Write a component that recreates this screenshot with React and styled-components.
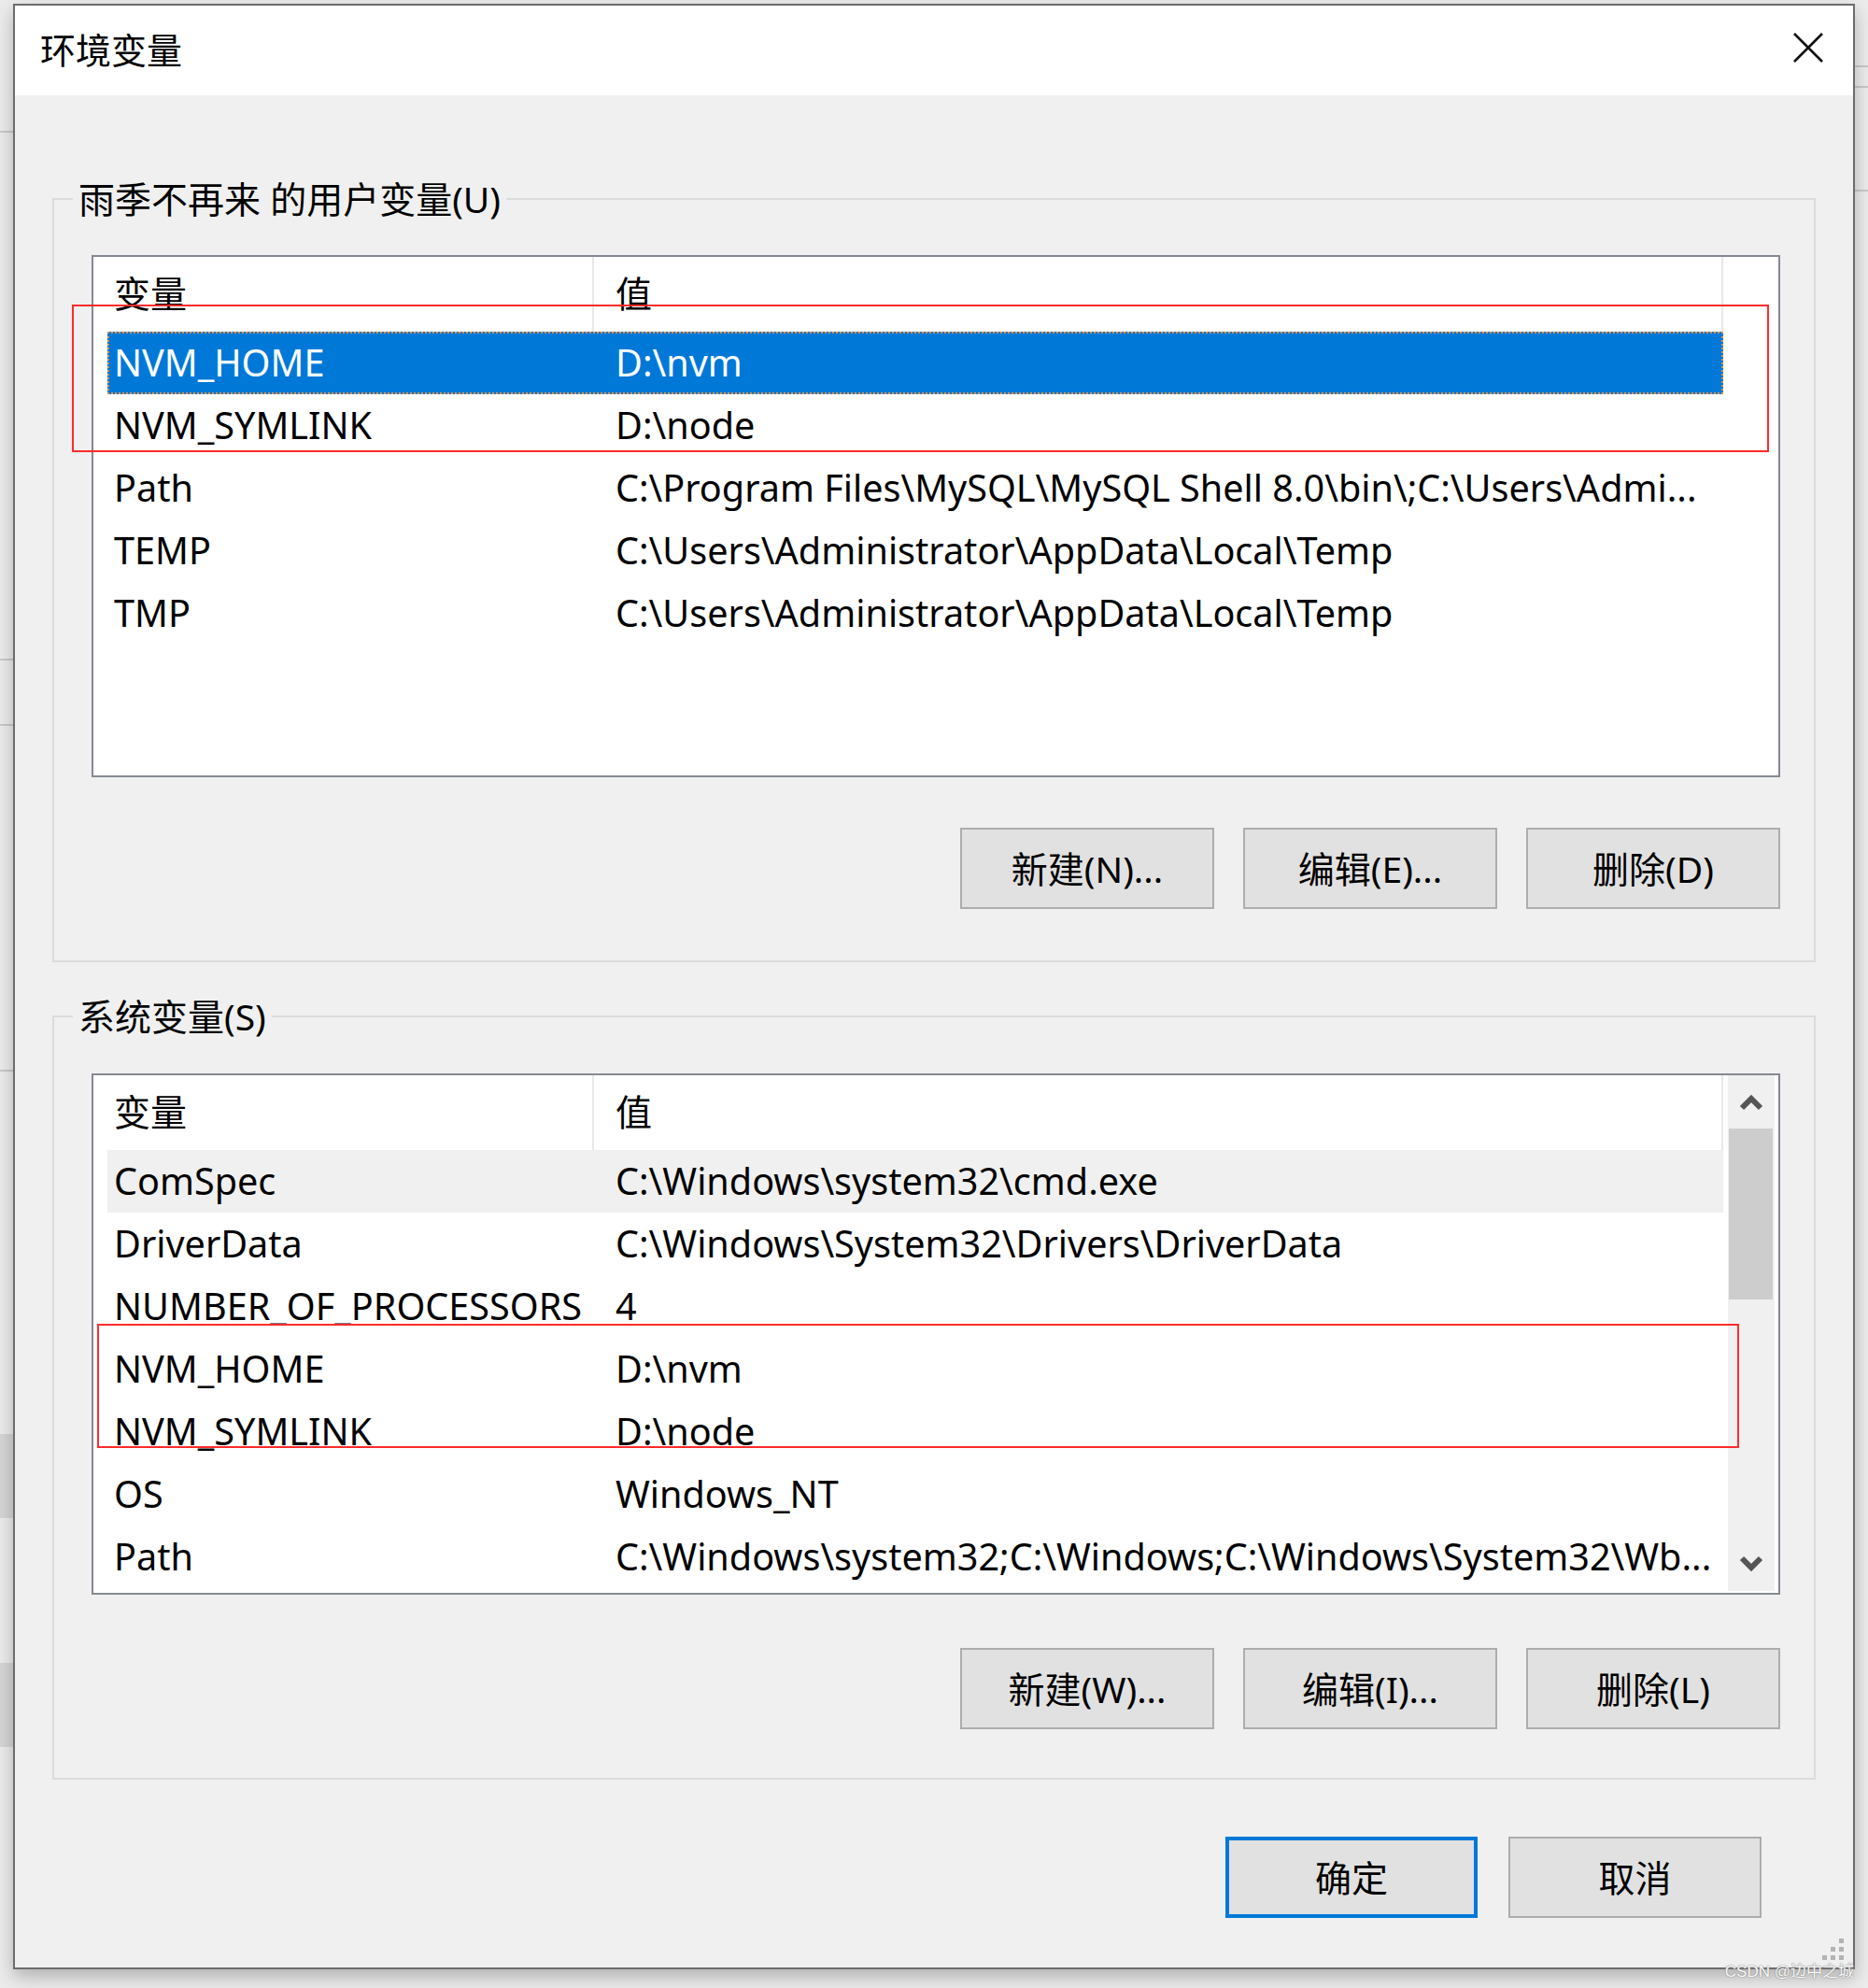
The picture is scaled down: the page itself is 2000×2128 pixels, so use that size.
import React from 'react';
import styled, { createGlobalStyle } from 'styled-components';

const GlobalStyle = createGlobalStyle`
  html, body {
    margin: 0;
    padding: 0;
  }
  body {
    width: 2000px;
    height: 2128px;
    overflow: hidden;
    background: #e3e3e3;
    font-family: "Noto Sans", "Noto Sans CJK SC", sans-serif;
    color: #000;
  }
`;

const Screen = styled.div`
  position: relative;
  width: 2000px;
  height: 2128px;
  box-sizing: border-box;
  padding: 4px 14px 0 14px;
  background:
    linear-gradient(#c9c9c9, #c9c9c9) 0 140px / 14px 2px no-repeat,
    linear-gradient(#c9c9c9, #c9c9c9) 0 705px / 14px 2px no-repeat,
    linear-gradient(#c9c9c9, #c9c9c9) 0 775px / 14px 2px no-repeat,
    linear-gradient(#c9c9c9, #c9c9c9) 0 1145px / 14px 2px no-repeat,
    linear-gradient(#d6d6d6, #d6d6d6) 0 1535px / 14px 90px no-repeat,
    linear-gradient(#d6d6d6, #d6d6d6) 0 1780px / 14px 90px no-repeat,
    linear-gradient(#c9c9c9, #c9c9c9) 1986px 70px / 14px 2px no-repeat,
    linear-gradient(#c9c9c9, #c9c9c9) 1986px 92px / 14px 2px no-repeat,
    linear-gradient(#c9c9c9, #c9c9c9) 1986px 203px / 14px 2px no-repeat,
    #ececec;
`;

const Dialog = styled.div`
  position: relative;
  width: 1972px;
  height: 2104px;
  box-sizing: border-box;
  border: 2px solid #6c6c6c;
  background: #f0f0f0;
  box-shadow: 0 8px 18px rgba(0, 0, 0, 0.25);
  display: flex;
  flex-direction: column;
`;

const TitleBar = styled.div`
  height: 96px;
  flex: none;
  background: #fff;
  display: flex;
  align-items: center;
  justify-content: space-between;
  padding-left: 27px;
`;

const Title = styled.div`
  font-family: "Noto Sans CJK SC", sans-serif;
  font-size: 38px;
  line-height: 1;
  margin-bottom: 5px;
`;

const CloseButton = styled.div`
  width: 96px;
  height: 90px;
  margin-bottom: 6px;
  display: flex;
  align-items: center;
  justify-content: center;
`;

const Body = styled.div`
  flex: 1;
  display: flex;
  flex-direction: column;
  padding: 85px 40px 0 40px;
`;

const Group = styled.fieldset`
  margin: ${p => p.$top}px 0 0 0;
  padding: 0;
  min-width: 0;
  border: 2px solid #dcdcdc;
`;

const Legend = styled.legend`
  margin-left: 20px;
  padding: 0 6px;
  font-size: 39px;
  line-height: 52px;
  font-family: "Noto Sans", "Noto Sans CJK SC", sans-serif;
`;

const GroupInner = styled.div`
  display: flex;
  flex-direction: column;
  padding: ${p => p.$padTop}px 36px ${p => p.$padBottom}px 40px;
`;

const ListWrap = styled.div`
  position: relative;
`;

const ListBox = styled.div`
  height: ${p => p.$h}px;
  box-sizing: border-box;
  border: 2px solid #858991;
  background: #fff;
  display: flex;
  overflow: hidden;
`;

const ListBody = styled.div`
  flex: 1;
  display: flex;
  flex-direction: column;
  padding-left: 15px;
`;

const HeaderRow = styled.div`
  display: flex;
  height: 80px;
  flex: none;
`;

const HeaderCell = styled.div`
  width: ${p => p.$w}px;
  box-sizing: border-box;
  padding-left: ${p => p.$pad}px;
  border-right: 2px solid #e8e8e8;
  font-size: 39px;
  line-height: 74px;
  font-family: "Noto Sans CJK SC", sans-serif;
`;

const Row = styled.div`
  display: flex;
  height: 67px;
  flex: none;
  width: 1730px;
  box-sizing: border-box;
  background: ${p => (p.$selected ? '#0078d7' : p.$hover ? '#f0f0f0' : 'transparent')};
  color: ${p => (p.$selected ? '#fff' : '#000')};
  outline: ${p => (p.$selected ? '2px dotted #e59342' : 'none')};
  outline-offset: -2px;
`;

const Cell = styled.div`
  width: ${p => p.$w}px;
  box-sizing: border-box;
  padding-left: ${p => p.$pad}px;
  font-size: 39.6px;
  line-height: 67px;
  white-space: nowrap;
  overflow: hidden;
`;

const ScrollBar = styled.div`
  width: 50px;
  flex: none;
  margin: 0 4px 2px 0;
  background: #f0f0f0;
  display: flex;
  flex-direction: column;
`;

const ScrollArrow = styled.div`
  height: 56px;
  flex: none;
  display: flex;
  align-items: center;
  justify-content: center;
`;

const ScrollTrack = styled.div`
  flex: 1;
  padding: 1px 2px 0 1px;
`;

const Thumb = styled.div`
  height: 183px;
  background: #cdcdcd;
`;

const Highlight = styled.div`
  position: absolute;
  left: ${p => p.$x}px;
  top: ${p => p.$y}px;
  width: ${p => p.$w}px;
  height: ${p => p.$h}px;
  box-sizing: border-box;
  border: 2px solid #ff2b2b;
  pointer-events: none;
`;

const ButtonRow = styled.div`
  display: flex;
  justify-content: flex-end;
  gap: ${p => p.$gap || 31}px;
  margin-top: ${p => p.$top}px;
  padding-right: ${p => p.$right || 0}px;
`;

const Button = styled.button`
  width: ${p => p.$w || 272}px;
  height: 87px;
  box-sizing: border-box;
  padding: 0;
  background: #e1e1e1;
  border: ${p => (p.$primary ? '4px solid #0078d7' : '2px solid #adadad')};
  color: #000;
  font-family: "Noto Sans", "Noto Sans CJK SC", sans-serif;
  font-size: 39px;
  line-height: 1;
`;

const Grip = styled.svg`
  position: absolute;
  right: 8px;
  bottom: 6px;
`;

const Watermark = styled.div`
  position: absolute;
  right: 15px;
  bottom: 9px;
  font-family: "Liberation Sans", "Noto Sans CJK SC", sans-serif;
  font-size: 17px;
  line-height: 1;
  color: #fafafa;
  text-shadow: 0 0 1px #777, 0 0 2px #999;
`;

const COLS = [
  { w: 521, pad: 7 },
  { w: 1209, pad: 23 },
];

const userVars = [
  ['NVM_HOME', 'D:\\nvm'],
  ['NVM_SYMLINK', 'D:\\node'],
  ['Path', 'C:\\Program Files\\MySQL\\MySQL Shell 8.0\\bin\\;C:\\Users\\Admi...'],
  ['TEMP', 'C:\\Users\\Administrator\\AppData\\Local\\Temp'],
  ['TMP', 'C:\\Users\\Administrator\\AppData\\Local\\Temp'],
];

const sysVars = [
  ['ComSpec', 'C:\\Windows\\system32\\cmd.exe'],
  ['DriverData', 'C:\\Windows\\System32\\Drivers\\DriverData'],
  ['NUMBER_OF_PROCESSORS', '4'],
  ['NVM_HOME', 'D:\\nvm'],
  ['NVM_SYMLINK', 'D:\\node'],
  ['OS', 'Windows_NT'],
  ['Path', 'C:\\Windows\\system32;C:\\Windows;C:\\Windows\\System32\\Wb...'],
];

const Chevron = ({ up }) => (
  <svg width="28" height="22" viewBox="0 0 28 22">
    <polyline
      points={up ? '4,18 14,8 24,18' : '4,4 14,14 24,4'}
      fill="none"
      stroke="#555"
      strokeWidth="6"
    />
  </svg>
);

const VarList = ({ rows, height, selected, hover, scroll }) => (
  <ListBox $h={height}>
    <ListBody>
      <HeaderRow>
        <HeaderCell $w={COLS[0].w} $pad={COLS[0].pad}>变量</HeaderCell>
        <HeaderCell $w={COLS[1].w} $pad={COLS[1].pad}>值</HeaderCell>
      </HeaderRow>
      {rows.map(([name, value], i) => (
        <Row key={name + i} $selected={i === selected} $hover={i === hover}>
          <Cell $w={COLS[0].w} $pad={COLS[0].pad}>{name}</Cell>
          <Cell $w={COLS[1].w} $pad={COLS[1].pad}>{value}</Cell>
        </Row>
      ))}
    </ListBody>
    {scroll && (
      <ScrollBar>
        <ScrollArrow><Chevron up /></ScrollArrow>
        <ScrollTrack><Thumb /></ScrollTrack>
        <ScrollArrow><Chevron /></ScrollArrow>
      </ScrollBar>
    )}
  </ListBox>
);

export default function App() {
  return (
    <Screen>
      <GlobalStyle />
      <Dialog>
        <TitleBar>
          <Title>环境变量</Title>
          <CloseButton>
            <svg width="34" height="34" viewBox="0 0 34 34">
              <path d="M2 2 L32 32 M32 2 L2 32" stroke="#111" strokeWidth="2.6" />
            </svg>
          </CloseButton>
        </TitleBar>
        <Body>
          <Group $top={0}>
            <Legend>雨季不再来 的用户变量(U)</Legend>
            <GroupInner $padTop={34} $padBottom={55}>
              <ListWrap>
                <VarList rows={userVars} height={559} selected={0} />
                <Highlight $x={-21} $y={53} $w={1817} $h={158} />
              </ListWrap>
              <ButtonRow $top={54}>
                <Button>新建(N)...</Button>
                <Button>编辑(E)...</Button>
                <Button>删除(D)</Button>
              </ButtonRow>
            </GroupInner>
          </Group>
          <Group $top={32}>
            <Legend>系统变量(S)</Legend>
            <GroupInner $padTop={35} $padBottom={52}>
              <ListWrap>
                <VarList rows={sysVars} height={558} hover={0} scroll />
                <Highlight $x={6} $y={268} $w={1758} $h={133} />
              </ListWrap>
              <ButtonRow $top={57}>
                <Button>新建(W)...</Button>
                <Button>编辑(I)...</Button>
                <Button>删除(L)</Button>
              </ButtonRow>
            </GroupInner>
          </Group>
          <ButtonRow $top={61} $right={58} $gap={33}>
            <Button $w={270} $primary>确定</Button>
            <Button $w={271}>取消</Button>
          </ButtonRow>
        </Body>
        <Grip width="26" height="26" viewBox="0 0 26 26">
          <g fill="#b3b3b3">
            <rect x="19" y="1" width="5" height="5" />
            <rect x="19" y="10" width="5" height="5" />
            <rect x="10" y="10" width="5" height="5" />
            <rect x="19" y="19" width="5" height="5" />
            <rect x="10" y="19" width="5" height="5" />
            <rect x="1" y="19" width="5" height="5" />
          </g>
        </Grip>
      </Dialog>
      <Watermark>CSDN @边中之城</Watermark>
    </Screen>
  );
}
